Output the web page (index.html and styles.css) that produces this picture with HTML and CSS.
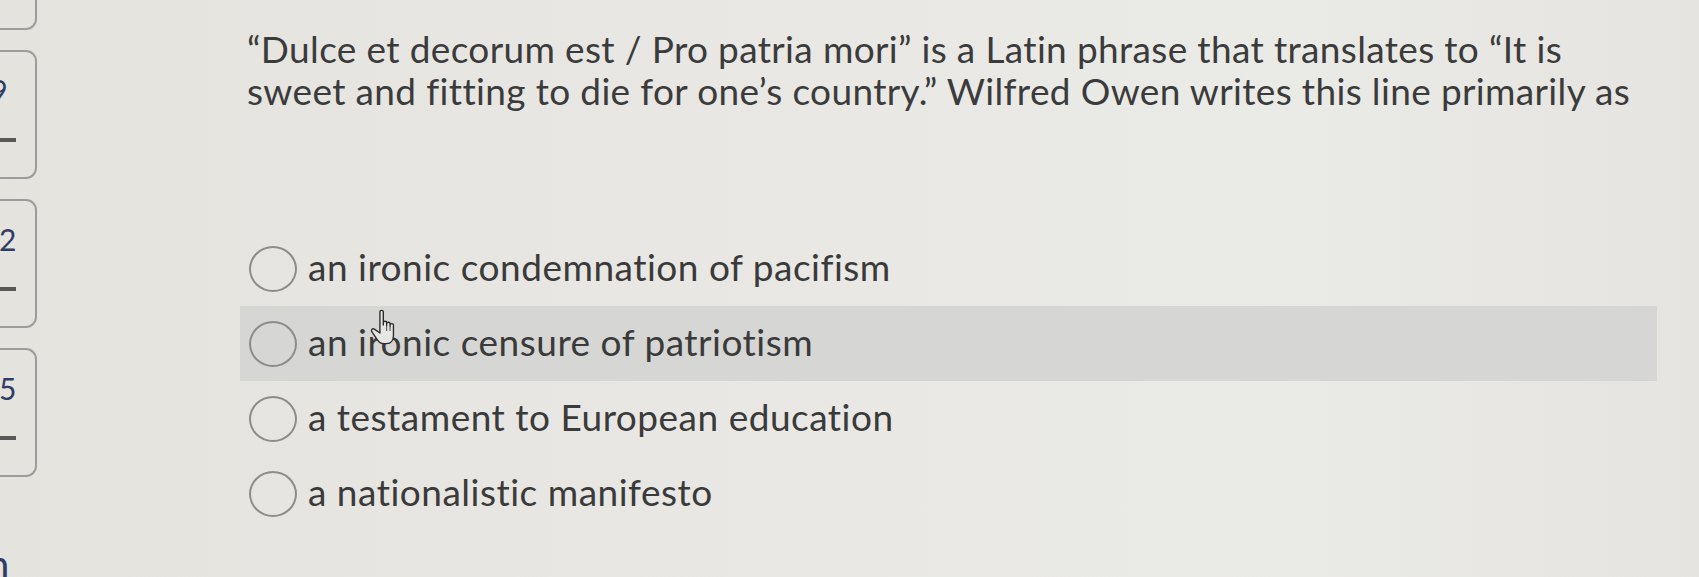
FILE: index.html
```html
<!DOCTYPE html>
<html lang="en">
<head>
<meta charset="utf-8">
<title>Quiz question</title>
<link rel="stylesheet" href="styles.css">
</head>
<body>
<div class="page">
  <aside class="sidebar">
    <div class="qbox"><span class="qnum">6</span><span class="qdash"></span></div>
    <div class="qbox"><span class="qnum">9</span><span class="qdash"></span></div>
    <div class="qbox"><span class="qnum">12</span><span class="qdash"></span></div>
    <div class="qbox"><span class="qnum">15</span><span class="qdash"></span></div>
    <div class="qmore"><span>n</span></div>
  </aside>
  <main class="main">
    <p class="question">“Dulce et decorum est / Pro patria mori” is a Latin phrase that translates to “It is sweet and fitting to die for one’s country.” Wilfred Owen writes this line primarily as</p>
    <div class="options">
      <label class="option"><span class="radio"></span><span class="label">an ironic condemnation of pacifism</span></label>
      <label class="option hover"><span class="radio"></span><span class="label">an ironic censure of patriotism<svg class="cursor" viewBox="0 0 20 26" width="34" height="44" aria-hidden="true">
          <path d="M7 1.6 C7 0.5 9 0.5 9 1.6 L9 9.5 L9 8 C9 7 11 7 11 8 L11 9.8 L11 8.6 C11 7.6 13 7.6 13 8.6 L13 10.2 L13 9.4 C13 8.4 15 8.4 15 9.4 L15 15.5 C15 18.5 13.5 20.5 11 20.5 L9.2 20.5 C7.4 20.5 6.3 19.6 5.3 18 L2.2 13.4 C1.6 12.4 2.6 11.2 3.7 11.9 L7 14.2 Z" fill="#e6e6e4" stroke="#2a2a2a" stroke-width="0.8" stroke-linejoin="round"/>
          <path d="M11 10 L11 13 M13 10.4 L13 13" stroke="#2a2a2a" stroke-width="0.5" fill="none"/>
        </svg></span>
      </label>
      <label class="option"><span class="radio"></span><span class="label">a testament to European education</span></label>
      <label class="option"><span class="radio"></span><span class="label">a nationalistic manifesto</span></label>
    </div>
  </main>
</div>
</body>
</html>
```
FILE: styles.css
```css
html, body {
  margin: 0;
  padding: 0;
}
body {
  width: 1699px;
  height: 577px;
  overflow: hidden;
  background: linear-gradient(90deg, #e4e3de 0%, #e8e7e3 40%, #eaeae6 75%, #e5e4e0 100%);
  font-family: Lato, "Open Sans", sans-serif;
  font-variant-ligatures: none;
  color: #3c3c3c;
}
.page {
  display: flex;
  height: 577px;
}
.sidebar {
  width: 38px;
  flex-shrink: 0;
  overflow: hidden;
  display: flex;
  flex-direction: column;
  gap: 20px;
  margin-top: -99px;
}
.qbox {
  flex-shrink: 0;
  width: 76px;
  height: 129px;
  margin-left: -39px;
  box-sizing: border-box;
  border: 2px solid #9c9c9a;
  border-radius: 11px;
  display: flex;
  flex-direction: column;
  align-items: center;
  padding-top: 23px;
}
.qnum {
  font-size: 30px;
  line-height: 30px;
  color: #2f3c66;
}
.qdash {
  display: block;
  width: 34px;
  height: 4px;
  margin-top: 33px;
  background: #585856;
}
.qmore {
  flex-shrink: 0;
  margin-top: 47px;
  margin-left: -13px;
  font-size: 40px;
  line-height: 40px;
  color: #2f3c66;
}
.main {
  flex: 1;
  padding-left: 209px;
}
.question {
  margin: 0;
  padding-top: 28px;
  width: 1405px;
  font-size: 37px;
  letter-spacing: 0.35px;
  line-height: 42px;
  color: #3b3b3b;
}
.options {
  margin-top: 119px;
  margin-left: -7px;
  width: 1417px;
  display: flex;
  flex-direction: column;
}
.option {
  display: flex;
  align-items: center;
  height: 75px;
  padding-left: 9px;
}
.option.hover {
  background: #d6d6d4;
}
.radio {
  flex-shrink: 0;
  width: 48px;
  height: 46px;
  box-sizing: border-box;
  border: 2px solid #8c8c8b;
  border-radius: 50%;
}
.label {
  position: relative;
  top: -2px;
  margin-left: 11px;
  font-size: 37px;
  letter-spacing: 0.5px;
  line-height: 42px;
  color: #3a3a3a;
}
.cursor {
  position: absolute;
  left: 60px;
  top: -12px;
}
```
